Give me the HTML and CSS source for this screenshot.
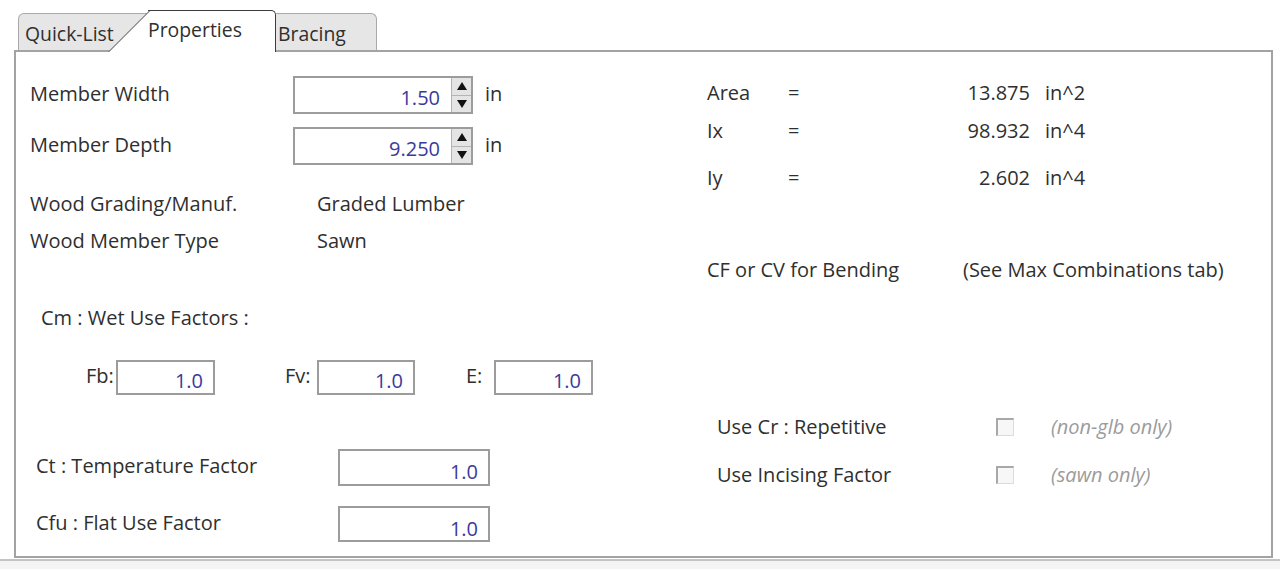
FILE: index.html
```html
<!DOCTYPE html>
<html lang="en">
<head>
    <meta charset="UTF-8">
    <meta name="viewport" content="width=device-width, initial-scale=1.0">
    <title>Properties</title>
    <link rel="stylesheet" href="styles.css">
</head>
<body>
    <div class="tabs">
        <div class="tab tab-quick">Quick-List</div>
        <div class="tab tab-active">Properties</div>
        <div class="tab tab-bracing">Bracing</div>
    </div>

    <div class="panel">
        <div class="col-left">
            <div class="row-input">
                <span class="lbl-input">Member Width</span>
                <div class="spin-box">
                    <span class="val">1.50</span>
                    <span class="spinner"><span class="half"><i class="tri-up"></i></span><span class="half"><i class="tri-down"></i></span></span>
                </div>
                <span class="unit">in</span>
            </div>
            <div class="row-input">
                <span class="lbl-input">Member Depth</span>
                <div class="spin-box">
                    <span class="val">9.250</span>
                    <span class="spinner"><span class="half"><i class="tri-up"></i></span><span class="half"><i class="tri-down"></i></span></span>
                </div>
                <span class="unit">in</span>
            </div>

            <div class="row-text first">
                <span class="lbl-text">Wood Grading/Manuf.</span>
                <span>Graded Lumber</span>
            </div>
            <div class="row-text">
                <span class="lbl-text">Wood Member Type</span>
                <span>Sawn</span>
            </div>

            <div class="heading-cm">Cm : Wet Use Factors :</div>
            <div class="row-factors">
                <span class="factor-lbl fb">Fb:</span>
                <span class="box box-sm">1.0</span>
                <span class="factor-lbl fv">Fv:</span>
                <span class="box box-sm box-fv">1.0</span>
                <span class="factor-lbl fe">E:</span>
                <span class="box box-sm">1.0</span>
            </div>

            <div class="row-factor ct">
                <span class="lbl-factor">Ct : Temperature Factor</span>
                <span class="box box-wide">1.0</span>
            </div>
            <div class="row-factor cfu">
                <span class="lbl-factor">Cfu : Flat Use Factor</span>
                <span class="box box-wide">1.0</span>
            </div>
        </div>

        <div class="col-right">
            <div class="prop-row area">
                <span class="prop-name">Area</span>
                <span class="prop-eq">=</span>
                <span class="prop-val">13.875</span>
                <span class="prop-unit">in^2</span>
            </div>
            <div class="prop-row ix">
                <span class="prop-name">Ix</span>
                <span class="prop-eq">=</span>
                <span class="prop-val">98.932</span>
                <span class="prop-unit">in^4</span>
            </div>
            <div class="prop-row iy">
                <span class="prop-name">Iy</span>
                <span class="prop-eq">=</span>
                <span class="prop-val">2.602</span>
                <span class="prop-unit">in^4</span>
            </div>

            <div class="prop-row bending">
                <span class="lbl-bending">CF or CV for Bending</span>
                <span>(See Max Combinations tab)</span>
            </div>

            <div class="check-row first">
                <span class="lbl-check">Use Cr : Repetitive</span>
                <span class="checkbox"></span>
                <span class="note">(non-glb only)</span>
            </div>
            <div class="check-row">
                <span class="lbl-check">Use Incising Factor</span>
                <span class="checkbox"></span>
                <span class="note">(sawn only)</span>
            </div>
        </div>
    </div>
    <div class="bottom-strip"></div>
</body>
</html>
```

FILE: styles.css
```css
body {
    margin: 0;
    font-family: "Open Sans", "Noto Sans", sans-serif;
    font-size: 20px;
    color: #2f2f2f;
    background-color: #fff;
}

/* tab strip */
.tabs {
    display: flex;
    align-items: flex-end;
    height: 50px;
    padding-left: 18px;
    font-size: 19.4px;
}
.tab {
    box-sizing: border-box;
    height: 37px;
    padding-top: 5px;
    line-height: 30px;
    white-space: nowrap;
    background-color: #e6e6e6;
    border: 1px solid #a9a9a9;
    border-bottom: none;
}
.tab-quick {
    width: 130px;
    padding-left: 6px;
    border-top-left-radius: 6px;
}
.tab-active {
    position: relative;
    z-index: 2;
    width: 128px;
    height: 42px;
    margin-bottom: -2px;
    padding-top: 4px;
    background-color: #fff;
    border-color: #3c3c3c;
    border-left: none;
    border-top-right-radius: 5px;
}
.tab-active::before {
    content: "";
    position: absolute;
    z-index: -1;
    left: -40px;
    top: 0;
    bottom: 0;
    width: 46px;
    background-color: #fff;
    border-left: 1px solid #3c3c3c;
    transform: skewX(-45deg);
    transform-origin: bottom left;
}
.tab-bracing {
    width: 101px;
    padding-left: 2px;
    border-left: none;
    border-top-right-radius: 6px;
}

/* main panel */
.panel {
    box-sizing: border-box;
    display: grid;
    grid-template-columns: 677px 1fr;
    width: 1259px;
    height: 508px;
    margin-left: 14px;
    padding: 24px 0 0 14px;
    border: 2px solid #a3a3a3;
}

.row-input {
    display: flex;
    align-items: center;
    height: 38px;
}
.row-input + .row-input {
    margin-top: 13px;
}
.lbl-input {
    width: 263px;
    padding-bottom: 3px;
}
.spin-box {
    box-sizing: border-box;
    display: flex;
    width: 180px;
    height: 38px;
    border: 2px solid #9c9c9c;
}
.spin-box .val {
    flex: 1;
    padding: 6px 11px 0 0;
    line-height: 28px;
    text-align: right;
    color: #3a3a9c;
}
.spinner {
    display: flex;
    flex-direction: column;
    width: 19px;
    background-color: #e4e4e4;
    border-left: 1px solid #b4b4b4;
}
.spinner .half {
    flex: 1;
    display: flex;
    align-items: center;
    justify-content: center;
}
.spinner .half + .half {
    border-top: 1px solid #b4b4b4;
}
.tri-up {
    width: 0;
    height: 0;
    border-left: 5px solid transparent;
    border-right: 5px solid transparent;
    border-bottom: 8px solid #111;
}
.tri-down {
    width: 0;
    height: 0;
    border-left: 5px solid transparent;
    border-right: 5px solid transparent;
    border-top: 8px solid #111;
}
.unit {
    margin-left: 12px;
    padding-bottom: 4px;
}

.row-text {
    display: flex;
    height: 37px;
    line-height: 37px;
}
.row-text.first {
    margin-top: 20px;
}
.lbl-text {
    width: 287px;
}

.heading-cm {
    margin-top: 44px;
    padding-left: 11px;
    line-height: 30px;
}

.row-factors {
    display: flex;
    align-items: center;
    height: 35px;
    margin-top: 27px;
}
.factor-lbl {
    padding-bottom: 4px;
}
.fb {
    width: 30px;
    margin-left: 56px;
}
.fv {
    width: 32px;
    margin-left: 70px;
}
.fe {
    width: 28px;
    margin-left: 51px;
}
.box {
    box-sizing: border-box;
    height: 35px;
    padding: 4px 10px 0 0;
    line-height: 29px;
    text-align: right;
    color: #3a3a9c;
    border: 2px solid #9c9c9c;
}
.box-sm {
    width: 99px;
}
.box-fv {
    width: 98px;
}

.row-factor {
    display: flex;
    align-items: center;
    padding-left: 6px;
}
.row-factor.ct {
    margin-top: 54px;
}
.row-factor.cfu {
    margin-top: 20px;
}
.lbl-factor {
    width: 302px;
    padding-bottom: 4px;
}
.box-wide {
    width: 152px;
    height: 37px;
    padding-top: 6px;
}
.cfu .box-wide {
    height: 36px;
}

/* right column */
.prop-row {
    display: flex;
    height: 30px;
    line-height: 30px;
}
.prop-row.area {
    margin-top: 2px;
}
.prop-row.ix {
    margin-top: 8px;
}
.prop-row.iy {
    margin-top: 17px;
}
.prop-name {
    width: 81px;
}
.prop-eq {
    width: 100px;
}
.prop-val {
    width: 142px;
    text-align: right;
}
.prop-unit {
    margin-left: 15px;
}
.prop-row.bending {
    margin-top: 62px;
}
.lbl-bending {
    width: 256px;
}

.check-row {
    display: flex;
    align-items: center;
    height: 30px;
    margin-top: 18px;
    padding-left: 10px;
}
.check-row.first {
    margin-top: 126px;
}
.lbl-check {
    width: 279px;
}
.checkbox {
    box-sizing: border-box;
    width: 18px;
    height: 18px;
    margin-top: 2px;
    background-color: #f7f7f7;
    border: 1px solid #dcdcdc;
    border-top: 2px solid #a8a8a8;
    border-left: 2px solid #a8a8a8;
}
.note {
    margin-left: 37px;
    font-style: italic;
    color: #9b9b9b;
}

.bottom-strip {
    height: 20px;
    margin-top: 1px;
    background-color: #f4f4f4;
    border-top: 2px solid #c4c4c4;
}
```
